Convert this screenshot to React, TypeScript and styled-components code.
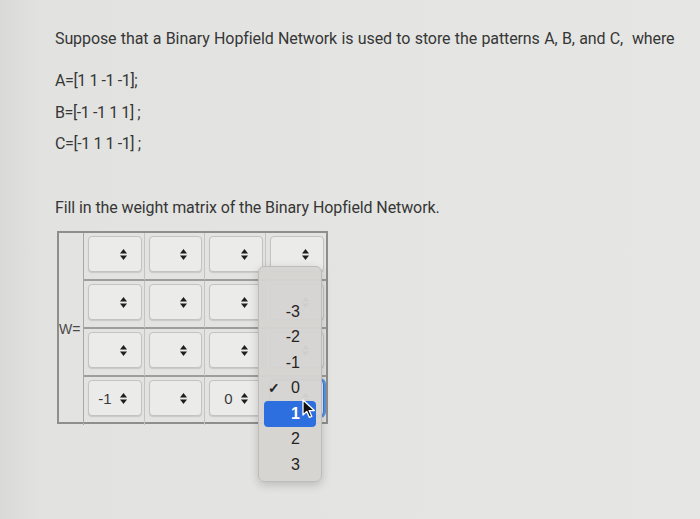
import React from 'react';
import styled, { createGlobalStyle } from 'styled-components';

const GlobalStyle = createGlobalStyle`
  html, body {
    margin: 0;
    padding: 0;
    background: #e4e5e2;
  }
  body {
    width: 700px;
    height: 519px;
    overflow: hidden;
    font-family: Roboto, "Liberation Sans", sans-serif;
  }
`;

const Page = styled.main`
  width: 700px;
  height: 519px;
  box-sizing: border-box;
  padding: 28px 0 0 55px;
  background: linear-gradient(90deg, #d9dad7 0px, #e2e3e0 40px, #e6e7e4 100%);
  color: #363636;
`;

const Question = styled.p`
  margin: 0;
  font-size: 16px;
  line-height: 22px;
  letter-spacing: -0.1px;
  word-spacing: 0.5px;
`;

const Patterns = styled.div`
  margin-top: 20px;
  display: flex;
  flex-direction: column;
  gap: 9.5px;
  font-size: 16px;
  line-height: 22px;
  letter-spacing: -0.4px;
`;

const Instruction = styled.p`
  margin: 42px 0 0 0;
  font-size: 16px;
  line-height: 22px;
  letter-spacing: -0.1px;
`;

const MatrixWrap = styled.div`
  position: relative;
  margin: 12px 0 0 2px;
  width: 271px;
`;

const Matrix = styled.div`
  display: grid;
  grid-template-columns: 25px repeat(4, 1fr);
  grid-template-rows: repeat(4, 48px);
  border: 2px solid #8e8e8c;
  box-sizing: border-box;
  width: 271px;
  height: 193px;
  background: #e3e4e1;
`;

const Label = styled.div`
  grid-row: 1 / span 4;
  grid-column: 1;
  display: flex;
  align-items: center;
  font-family: "Liberation Sans", Arial, sans-serif;
  font-size: 14px;
  color: #4a4a4a;
  border-right: 1px solid #a8a8a6;
  overflow: visible;
  white-space: nowrap;
`;

const Cell = styled.div<{ $last?: boolean; $lastRow?: boolean }>`
  display: flex;
  padding: 3px 2px 0 4px;
  border-right: ${({ $last }) => ($last ? 'none' : '1px solid #c4c5c2')};
  border-bottom: ${({ $lastRow }) => ($lastRow ? 'none' : '2px solid #9d9e9b')};
`;

const SelectBox = styled.div<{ $focus?: boolean }>`
  width: 100%;
  height: 36px;
  box-sizing: border-box;
  display: flex;
  align-items: center;
  justify-content: flex-end;
  gap: 8px;
  padding-right: 14px;
  background: #ebebea;
  border: 1px solid ${({ $focus }) => ($focus ? '#3a78d8' : '#c3c3c1')};
  border-radius: 4px;
  box-shadow: ${({ $focus }) =>
    $focus ? '0 0 0 2px #5b93e6' : '0 1px 1px rgba(0,0,0,0.12)'};
  font-family: "Liberation Sans", Arial, sans-serif;
  font-size: 15px;
  color: #3a3a3a;
`;

const Dropdown = styled.div`
  position: absolute;
  left: 201px;
  top: 35px;
  width: 64px;
  height: 216px;
  box-sizing: border-box;
  padding: 32px 5px 8px 5px;
  background: rgba(214, 212, 210, 0.97);
  border: 1px solid #bdbcba;
  border-radius: 6px;
  box-shadow: 0 3px 10px rgba(0, 0, 0, 0.18);
  font-family: "Liberation Sans", Arial, sans-serif;
  font-size: 16px;
  color: #242424;
`;

const Option = styled.div<{ $active?: boolean }>`
  position: relative;
  height: 25.5px;
  display: flex;
  align-items: center;
  justify-content: flex-end;
  padding-right: 16px;
  border-radius: 4px;
  background: ${({ $active }) => ($active ? '#2e6fe0' : 'transparent')};
  color: ${({ $active }) => ($active ? '#ffffff' : '#242424')};
  font-weight: ${({ $active }) => ($active ? 'bold' : 'normal')};
`;

const Check = styled.span`
  position: absolute;
  left: 4px;
  top: 50%;
  transform: translateY(-50%);
  font-size: 14px;
  font-weight: bold;
`;

const Cursor = styled.svg`
  position: absolute;
  left: 245px;
  top: 168px;
`;

const Arrows = () => (
  <svg width="7" height="11" viewBox="0 0 7 11">
    <polygon points="0,4.5 3.5,0 7,4.5" fill="#1e1e1e" />
    <polygon points="0,6.5 3.5,11 7,6.5" fill="#1e1e1e" />
  </svg>
);

const values: string[][] = [
  ['', '', '', ''],
  ['', '', '', ''],
  ['', '', '', ''],
  ['-1', '', '0', ''],
];

const options = ['-3', '-2', '-1', '0', '1', '2', '3'];

export default function App() {
  return (
    <>
      <GlobalStyle />
      <Page>
        <Question>
          Suppose that a Binary Hopfield Network is used to store the patterns A, B, and C,&nbsp; where
        </Question>
        <Patterns>
          <div>A=[1 1 -1 -1];</div>
          <div>B=[-1 -1 1 1] ;</div>
          <div>C=[-1 1 1 -1] ;</div>
        </Patterns>
        <Instruction>Fill in the weight matrix of the Binary Hopfield Network.</Instruction>
        <MatrixWrap>
          <Matrix>
            <Label>W=</Label>
            {values.map((row, r) =>
              row.map((v, c) => (
                <Cell
                  key={`${r}-${c}`}
                  $last={c === 3}
                  $lastRow={r === 3}
                  style={{ gridRow: r + 1, gridColumn: c + 2 }}
                >
                  <SelectBox $focus={r === 3 && c === 3}>
                    {v && <span>{v}</span>}
                    <Arrows />
                  </SelectBox>
                </Cell>
              ))
            )}
          </Matrix>
          <Dropdown>
            {options.map((o) => (
              <Option key={o} $active={o === '1'}>
                {o === '0' && <Check>✓</Check>}
                {o}
              </Option>
            ))}
          </Dropdown>
          <Cursor width="14" height="20" viewBox="0 0 14 20">
            <path
              d="M1 1 L1 16 L4.8 12.4 L7.4 18.4 L9.8 17.4 L7.2 11.6 L12.4 11.6 Z"
              fill="#111"
              stroke="#fff"
              strokeWidth="1.3"
              strokeLinejoin="round"
            />
          </Cursor>
        </MatrixWrap>
      </Page>
    </>
  );
}
